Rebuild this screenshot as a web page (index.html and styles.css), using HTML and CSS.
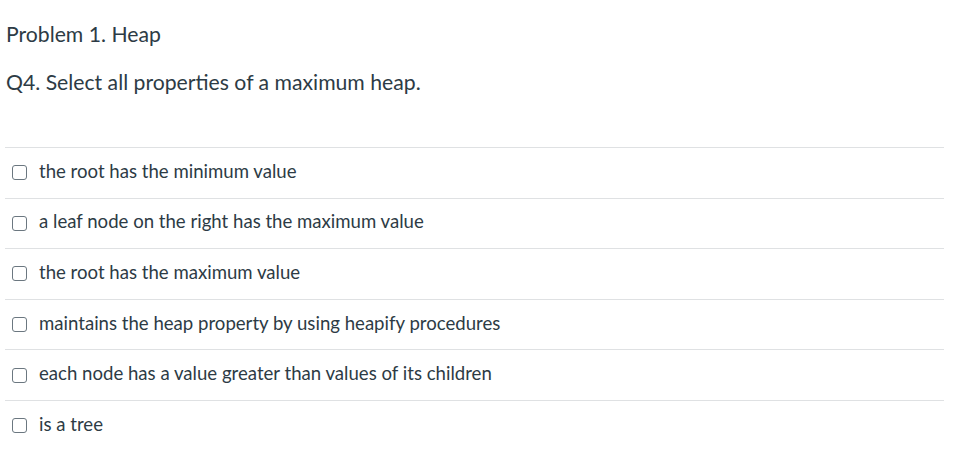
FILE: index.html
```html
<!DOCTYPE html>
<html>
<head>
<meta charset="utf-8">
<link rel="stylesheet" href="styles.css">
</head>
<body>
<div class="page">
  <h1 class="title">Problem 1. Heap</h1>
  <h2 class="question">Q4. Select all properties of a maximum heap.</h2>
  <div class="answers">
    <label class="answer"><span class="box"></span><span class="text">the root has the minimum value</span></label>
    <label class="answer"><span class="box"></span><span class="text">a leaf node on the right has the maximum value</span></label>
    <label class="answer"><span class="box"></span><span class="text">the root has the maximum value</span></label>
    <label class="answer"><span class="box"></span><span class="text">maintains the heap property by using heapify procedures</span></label>
    <label class="answer"><span class="box"></span><span class="text">each node has a value greater than values of its children</span></label>
    <label class="answer"><span class="box"></span><span class="text">is a tree</span></label>
  </div>
</div>
</body>
</html>
```

FILE: styles.css
```css
html, body {
  margin: 0;
  padding: 0;
  background: #ffffff;
}
.page {
  font-family: Lato, "Liberation Sans", sans-serif;
  color: #2d3b45;
  padding: 0 0 0 5px;
  width: 939px;
}
.title {
  font-size: 21.2px;
  font-weight: 400;
  margin: 0;
  padding: 21px 0 0 1px;
  line-height: 26px;
}
.question {
  font-size: 21.2px;
  font-weight: 400;
  margin: 0;
  padding: 22px 0 0 1px;
  line-height: 26px;
}
.answers {
  margin-top: 52px;
}
.answer {
  display: flex;
  align-items: center;
  height: 49.6px;
  border-top: 1px solid #dfe1e3;
  font-size: 18.6px;
}
.box {
  width: 13px;
  height: 13px;
  border: 1px solid #6b7780;
  border-radius: 3px;
  margin-left: 7px;
  margin-right: 12px;
  flex: none;
}
.text {
  line-height: 22px;
  margin-bottom: 4px;
}
```
